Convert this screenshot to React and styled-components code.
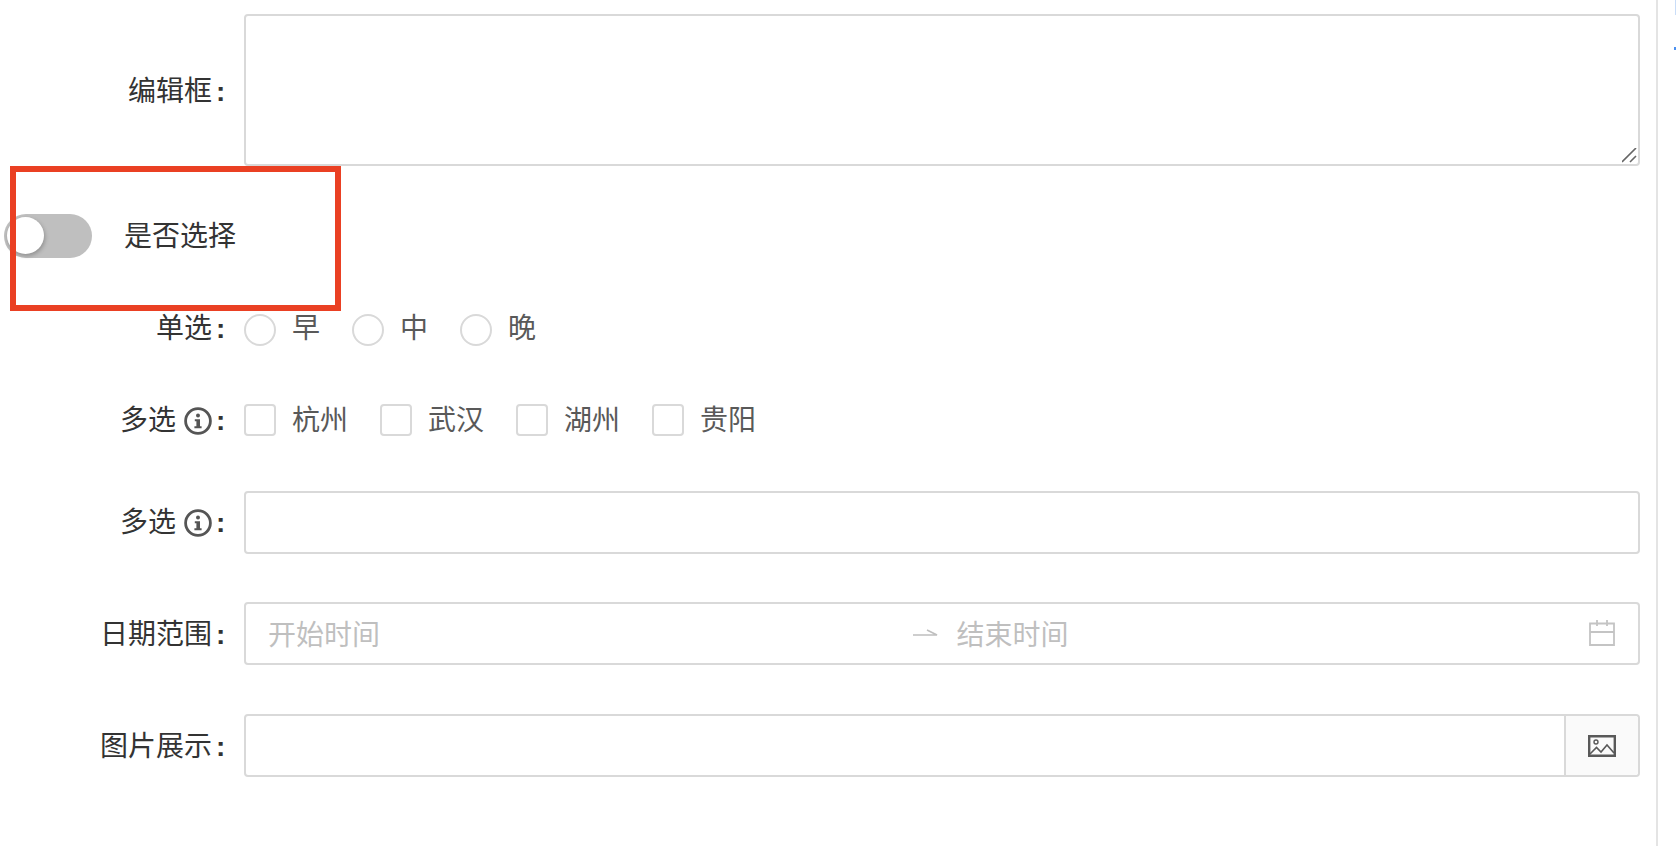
import React from "react";
import styled, { createGlobalStyle } from "styled-components";

const GlobalStyle = createGlobalStyle`
  html, body {
    margin: 0;
    padding: 0;
    background: #fff;
  }
  body {
    font-family: "Liberation Sans", "Noto Sans CJK SC", sans-serif;
  }
`;

const Page = styled.div`
  position: relative;
  width: 1676px;
  height: 846px;
  overflow: hidden;
`;

const Divider = styled.div`
  position: absolute;
  top: 0;
  right: 18px;
  width: 2px;
  height: 100%;
  background: #e4e4e4;
`;

const BlueMark = styled.div`
  position: absolute;
  top: 47px;
  right: 0;
  width: 2px;
  height: 3px;
  background: #4a90f0;
`;

const FaintMark = styled.div`
  position: absolute;
  top: 0;
  right: 0;
  width: 1px;
  height: 15px;
  background: #c9ddf8;
`;

const Form = styled.form`
  width: 1640px;
  padding-top: 14px;
`;

const Row = styled.div`
  display: flex;
  align-items: center;
  margin-top: ${(props) => props.$top || 0}px;
  ${(props) => props.$height && `height: ${props.$height}px;`}
`;

const Label = styled.label`
  flex: 0 0 244px;
  box-sizing: border-box;
  padding-right: 19px;
  margin-top: ${(props) => props.$shift || 0}px;
  display: flex;
  align-items: center;
  justify-content: flex-end;
  font-size: 28px;
  line-height: 40px;
  color: #333;
`;

const Colon = styled.span`
  margin-left: 4px;
  width: 9px;
  text-align: right;
  font-weight: bold;
`;

const InfoIcon = styled.svg`
  width: 28px;
  height: 28px;
  margin-left: 8px;
  color: #555;
`;

const TextArea = styled.div`
  position: relative;
  flex: 1;
  box-sizing: border-box;
  height: 152px;
  border: 2px solid #d9d9d9;
  border-radius: 4px;
`;

const Resize = styled.svg`
  position: absolute;
  right: 0;
  bottom: 0;
  width: 16px;
  height: 16px;
  color: #666;
`;

const SwitchTrack = styled.div`
  position: relative;
  margin-left: 4px;
  width: 88px;
  height: 44px;
  border-radius: 22px;
  background: #bfbfbf;
`;

const SwitchKnob = styled.div`
  position: absolute;
  left: 3px;
  top: 3px;
  width: 37px;
  height: 37px;
  border-radius: 50%;
  background: #fff;
  box-shadow: 1px 2px 4px rgba(0, 0, 0, 0.25);
`;

const SwitchText = styled.span`
  margin-left: 32px;
  margin-top: 2px;
  font-size: 28px;
  line-height: 40px;
  color: #333;
`;

const OptionGroup = styled.div`
  display: flex;
  align-items: center;
  gap: 32px;
`;

const Option = styled.label`
  display: flex;
  align-items: center;
  gap: 16px;
  font-size: 28px;
  line-height: 32px;
  color: #595959;
`;

const OptionText = styled.span`
  margin-top: ${(props) => props.$shift || 0}px;
`;

const RadioMark = styled.span`
  box-sizing: border-box;
  width: 32px;
  height: 32px;
  border: 2px solid #d9d9d9;
  border-radius: 50%;
`;

const CheckMark = styled.span`
  box-sizing: border-box;
  width: 32px;
  height: 32px;
  border: 2px solid #d9d9d9;
  border-radius: 4px;
`;

const Field = styled.div`
  flex: 1;
  box-sizing: border-box;
  height: 63px;
  display: flex;
  align-items: center;
  border: 2px solid #d9d9d9;
  border-radius: 4px;
`;

const DateText = styled.span`
  flex: 1;
  padding-left: 22px;
  margin-top: -2px;
  font-size: 28px;
  color: #bfbfbf;
`;

const DateArrow = styled.svg`
  width: 26px;
  height: 14px;
  margin-left: 11px;
  margin-right: -3px;
  margin-top: -3px;
  color: #bfbfbf;
`;

const CalendarIcon = styled.svg`
  width: 26px;
  height: 26px;
  margin-right: 23px;
  margin-top: -1px;
  color: #c4c4c4;
`;

const Spacer = styled.div`
  flex: 1;
`;

const Addon = styled.div`
  width: 72px;
  height: 100%;
  display: flex;
  align-items: center;
  justify-content: center;
  background: #fafafa;
  border-left: 2px solid #d9d9d9;
  border-radius: 0 4px 4px 0;
`;

const ImageIcon = styled.svg`
  width: 28px;
  height: 22px;
  color: #595959;
`;

const Highlight = styled.div`
  position: absolute;
  left: 10px;
  top: 166px;
  box-sizing: border-box;
  width: 331px;
  height: 145px;
  border: 6px solid #ea4023;
`;

const Info = () => (
  <InfoIcon viewBox="0 0 28 28" fill="none">
    <circle cx="14" cy="14" r="12.4" stroke="currentColor" strokeWidth="2.8" />
    <circle cx="14" cy="8.6" r="2" fill="currentColor" />
    <path d="M10.8 12.2h5.2v7h1.6v2H10.4v-2H12.4v-5h-1.6z" fill="currentColor" />
  </InfoIcon>
);

const radios = ["早", "中", "晚"];
const checks = ["杭州", "武汉", "湖州", "贵阳"];

const App = () => {
  return (
    <Page>
      <GlobalStyle />
      <Form>
        <Row>
          <Label $shift={4}>
            编辑框<Colon>:</Colon>
          </Label>
          <TextArea>
            <Resize viewBox="0 0 16 16" fill="none">
              <path d="M0 14L14 0M8 14l6-6" stroke="currentColor" strokeWidth="1.6" />
            </Resize>
          </TextArea>
        </Row>
        <Row $top={48}>
          <SwitchTrack>
            <SwitchKnob />
          </SwitchTrack>
          <SwitchText>是否选择</SwitchText>
        </Row>
        <Row $top={52} $height={40}>
          <Label $shift={-2}>
            单选<Colon>:</Colon>
          </Label>
          <OptionGroup>
            {radios.map((item) => (
              <Option key={item}>
                <RadioMark />
                <OptionText $shift={-2}>{item}</OptionText>
              </Option>
            ))}
          </OptionGroup>
        </Row>
        <Row $top={50} $height={40}>
          <Label $shift={2}>
            多选
            <Info />
            <Colon>:</Colon>
          </Label>
          <OptionGroup>
            {checks.map((item) => (
              <Option key={item}>
                <CheckMark />
                <OptionText $shift={2}>{item}</OptionText>
              </Option>
            ))}
          </OptionGroup>
        </Row>
        <Row $top={51}>
          <Label>
            多选
            <Info />
            <Colon>:</Colon>
          </Label>
          <Field />
        </Row>
        <Row $top={48}>
          <Label $shift={2}>
            日期范围<Colon>:</Colon>
          </Label>
          <Field>
            <DateText>开始时间</DateText>
            <DateArrow viewBox="0 0 26 14" fill="none">
              <path d="M1 10h24L15 5" stroke="currentColor" strokeWidth="1.6" />
            </DateArrow>
            <DateText>结束时间</DateText>
            <CalendarIcon viewBox="0 0 26 26" fill="none">
              <path d="M1 3.5h24v21.5H1zM1 12h24M8 0v6M18 0v6" stroke="currentColor" strokeWidth="1.8" />
            </CalendarIcon>
          </Field>
        </Row>
        <Row $top={49}>
          <Label $shift={2}>
            图片展示<Colon>:</Colon>
          </Label>
          <Field>
            <Spacer />
            <Addon>
              <ImageIcon viewBox="0 0 28 22" fill="none">
                <path d="M1.2 1.2h25.6v19.6H1.2z" stroke="currentColor" strokeWidth="2.4" />
                <circle cx="8" cy="7" r="2" stroke="currentColor" strokeWidth="1.4" />
                <path d="M2 19l6.5-6.5 4.5 4.5 6-7 7 8" stroke="currentColor" strokeWidth="1.6" />
              </ImageIcon>
            </Addon>
          </Field>
        </Row>
      </Form>
      <Highlight />
      <Divider />
      <FaintMark />
      <BlueMark />
    </Page>
  );
};

export default App;
